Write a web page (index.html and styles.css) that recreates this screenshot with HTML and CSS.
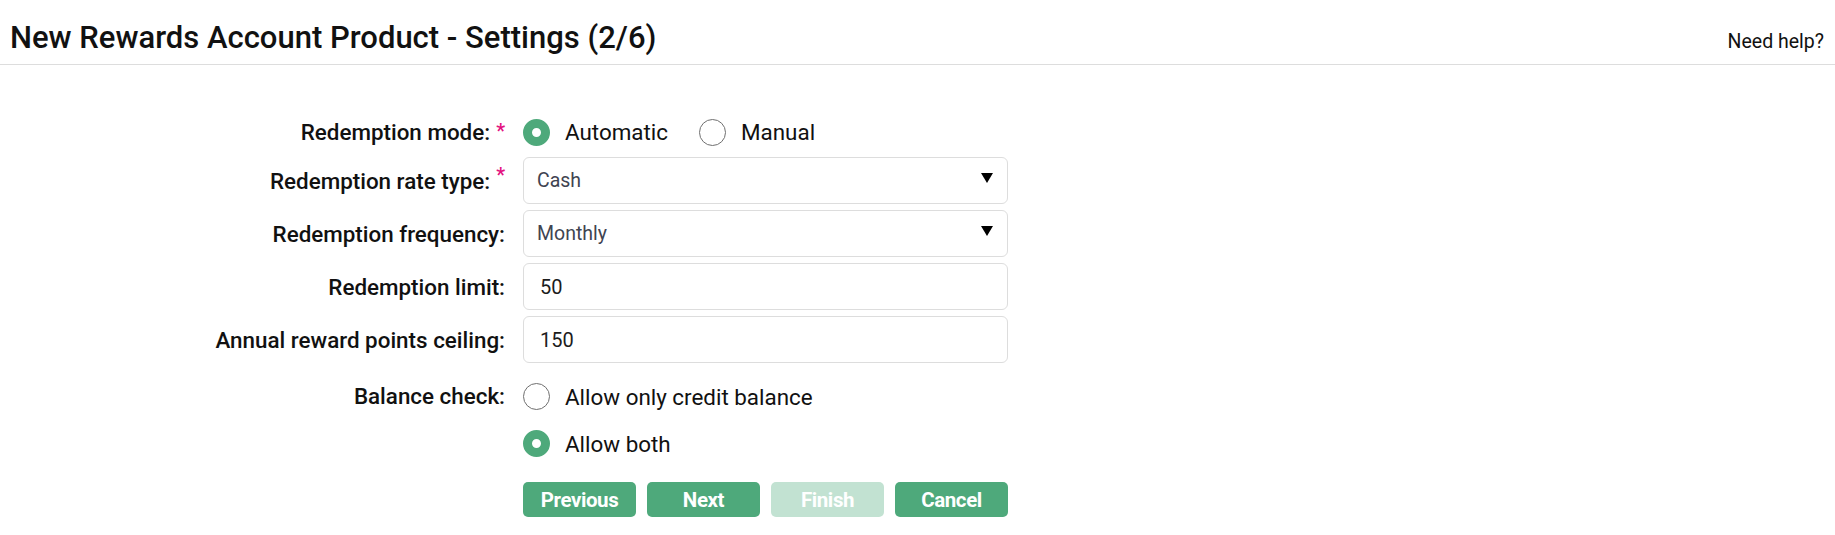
FILE: index.html
```html
<!DOCTYPE html>
<html lang="en">
<head>
<meta charset="utf-8">
<title>New Rewards Account Product - Settings (2/6)</title>
<link rel="stylesheet" href="styles.css">
</head>
<body>
<header class="page-header">
  <h1 class="page-title">New Rewards Account Product - Settings (2/6)</h1>
  <a class="help-link" href="#">Need help?</a>
</header>

<form class="settings-form">
  <div class="field-label row-radio">Redemption mode:<span class="req">*</span></div>
  <div class="field-control radio-group inline">
    <label class="radio-option"><span class="radio checked"></span><span>Automatic</span></label>
    <label class="radio-option"><span class="radio"></span><span>Manual</span></label>
  </div>

  <div class="field-label">Redemption rate type:<span class="req">*</span></div>
  <div class="field-control">
    <div class="select-box"><span class="select-value">Cash</span><svg class="caret" width="12" height="10" viewBox="0 0 12 10"><path d="M0 0H12L6 10Z" fill="#000"/></svg></div>
  </div>

  <div class="field-label">Redemption frequency:</div>
  <div class="field-control">
    <div class="select-box"><span class="select-value">Monthly</span><svg class="caret" width="12" height="10" viewBox="0 0 12 10"><path d="M0 0H12L6 10Z" fill="#000"/></svg></div>
  </div>

  <div class="field-label">Redemption limit:</div>
  <div class="field-control">
    <div class="text-input">50</div>
  </div>

  <div class="field-label">Annual reward points ceiling:</div>
  <div class="field-control">
    <div class="text-input">150</div>
  </div>

  <div class="field-label label-top">Balance check:</div>
  <div class="field-control radio-group stacked">
    <label class="radio-option"><span class="radio"></span><span>Allow only credit balance</span></label>
    <label class="radio-option"><span class="radio checked"></span><span>Allow both</span></label>
  </div>

  <div class="field-label"></div>
  <div class="field-control button-bar">
    <button type="button" class="btn">Previous</button>
    <button type="button" class="btn">Next</button>
    <button type="button" class="btn disabled">Finish</button>
    <button type="button" class="btn">Cancel</button>
  </div>
</form>
</body>
</html>
```

FILE: styles.css
```css
* { box-sizing: border-box; }

html, body {
  margin: 0;
  padding: 0;
  background: #ffffff;
}

body {
  font-family: Roboto, "Liberation Sans", Arial, sans-serif;
  color: #111111;
}

.page-header {
  display: flex;
  justify-content: space-between;
  align-items: baseline;
  height: 65px;
  padding: 20px 11px 0 10px;
  border-bottom: 1px solid #dddddd;
}

.page-title {
  margin: 0;
  font-size: 31px;
  font-weight: 500;
  line-height: 36px;
  color: #111111;
}

.help-link {
  font-size: 19.5px;
  color: #111111;
  text-decoration: none;
}

.settings-form {
  display: grid;
  grid-template-columns: 505px 485px;
  column-gap: 18px;
  row-gap: 6px;
  margin-top: 48px;
}

.field-label {
  display: flex;
  align-items: center;
  justify-content: flex-end;
  font-size: 22.4px;
  font-weight: 500;
  color: #111111;
  white-space: nowrap;
}

.label-top {
  align-items: flex-start;
  padding-top: 4px;
  line-height: 47px;
}

.req {
  color: #e3127f;
  margin-left: 6px;
  font-size: 20px;
  align-self: flex-start;
  margin-top: 6px;
}

.row-radio { height: 38px; }

.field-control {
  display: flex;
}

.radio-group.inline {
  align-items: center;
  height: 38px;
}

.radio-group.stacked {
  flex-direction: column;
  padding-top: 4px;
}

.radio-option {
  display: flex;
  align-items: center;
  gap: 15px;
  font-size: 22.4px;
  color: #111111;
  margin-right: 31px;
}

.radio-group.stacked .radio-option { height: 47px; }

.radio {
  width: 27px;
  height: 27px;
  border-radius: 50%;
  border: 1px solid #6f6f6f;
  background: #ffffff;
  flex: none;
}

.radio.checked {
  border: 9px solid #4ea97b;
  background: #ffffff;
}

.select-box,
.text-input {
  width: 485px;
  height: 47px;
  border: 1px solid #dddddd;
  border-radius: 6px;
  display: flex;
  align-items: center;
  background: #ffffff;
}

.select-box {
  justify-content: space-between;
  padding: 0 14px 0 13px;
}

.select-value {
  font-size: 19.5px;
  color: #3f4451;
}

.caret { margin-top: -6px; }

.text-input {
  padding-left: 16px;
  font-size: 20px;
  color: #1c1c1c;
}

.button-bar {
  gap: 11px;
  margin-top: 9px;
}

.btn {
  width: 113px;
  height: 35px;
  border: none;
  border-radius: 5px;
  background: #4ea97b;
  color: #ffffff;
  font-family: Roboto, "Liberation Sans", Arial, sans-serif;
  font-size: 20.5px;
  font-weight: 700;
  letter-spacing: -0.4px;
  padding: 0;
  cursor: pointer;
}

.btn.disabled {
  background: #c2e2d2;
  cursor: default;
}
```
